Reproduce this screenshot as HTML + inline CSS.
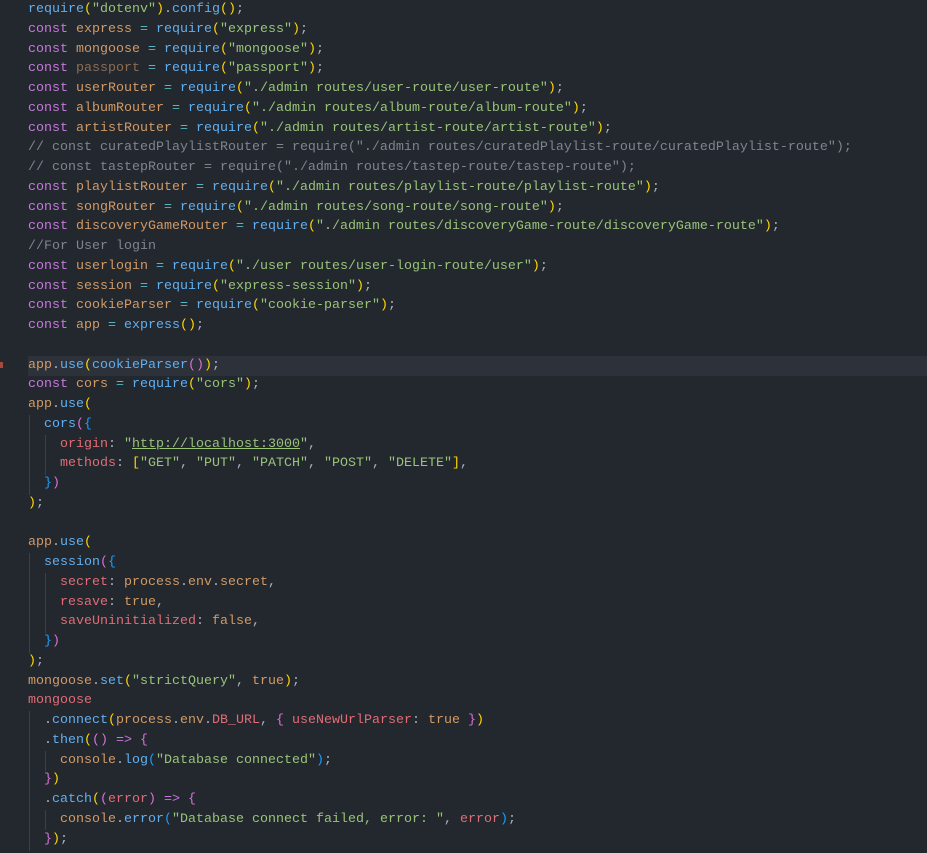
<!DOCTYPE html>
<html><head><meta charset="utf-8"><style>
html,body{margin:0;padding:0;background:#23272e;width:927px;height:853px;overflow:hidden}
pre{margin:0;position:absolute;left:28px;top:0;font-family:"Liberation Mono",monospace;font-size:13.33px;line-height:19.75px;color:#abb2bf;white-space:pre}
.k{color:#c678dd}.v{color:#d19a66}.u{color:#8c6d53}.f{color:#61afef}.s{color:#98c379}.c{color:#7f848e}.o{color:#56b6c2}.p{color:#e06c75}
.y{color:#ffd700}.m{color:#da70d6}.b{color:#179fff}
.hl{position:absolute;left:28px;right:0;top:356px;height:20px;background:#2c313a}
.g{position:absolute;width:1px;background:#3b4048}
.dot{position:absolute;left:0;width:3px;height:6px;background:#7a4a3a}
</style></head><body>
<div class="hl"></div>
<div class="g" style="left:29px;top:415px;height:80px"></div>
<div class="g" style="left:45px;top:435px;height:40px"></div>
<div class="g" style="left:29px;top:553px;height:100px"></div>
<div class="g" style="left:45px;top:573px;height:60px"></div>
<div class="g" style="left:29px;top:711px;height:140px"></div>
<div class="g" style="left:45px;top:751px;height:20px"></div>
<div class="g" style="left:45px;top:810px;height:20px"></div>
<div class="dot" style="top:362px;background:#a84a3a"></div>
<pre><span class="f">require</span><span class="y">(</span><span class="s">"dotenv"</span><span class="y">)</span>.<span class="f">config</span><span class="y">()</span>;
<span class="k">const</span> <span class="v">express</span> <span class="o">=</span> <span class="f">require</span><span class="y">(</span><span class="s">"express"</span><span class="y">)</span>;
<span class="k">const</span> <span class="v">mongoose</span> <span class="o">=</span> <span class="f">require</span><span class="y">(</span><span class="s">"mongoose"</span><span class="y">)</span>;
<span class="k">const</span> <span class="u">passport</span> <span class="o">=</span> <span class="f">require</span><span class="y">(</span><span class="s">"passport"</span><span class="y">)</span>;
<span class="k">const</span> <span class="v">userRouter</span> <span class="o">=</span> <span class="f">require</span><span class="y">(</span><span class="s">"./admin routes/user-route/user-route"</span><span class="y">)</span>;
<span class="k">const</span> <span class="v">albumRouter</span> <span class="o">=</span> <span class="f">require</span><span class="y">(</span><span class="s">"./admin routes/album-route/album-route"</span><span class="y">)</span>;
<span class="k">const</span> <span class="v">artistRouter</span> <span class="o">=</span> <span class="f">require</span><span class="y">(</span><span class="s">"./admin routes/artist-route/artist-route"</span><span class="y">)</span>;
<span class="c">// const curatedPlaylistRouter = require("./admin routes/curatedPlaylist-route/curatedPlaylist-route");</span>
<span class="c">// const tastepRouter = require("./admin routes/tastep-route/tastep-route");</span>
<span class="k">const</span> <span class="v">playlistRouter</span> <span class="o">=</span> <span class="f">require</span><span class="y">(</span><span class="s">"./admin routes/playlist-route/playlist-route"</span><span class="y">)</span>;
<span class="k">const</span> <span class="v">songRouter</span> <span class="o">=</span> <span class="f">require</span><span class="y">(</span><span class="s">"./admin routes/song-route/song-route"</span><span class="y">)</span>;
<span class="k">const</span> <span class="v">discoveryGameRouter</span> <span class="o">=</span> <span class="f">require</span><span class="y">(</span><span class="s">"./admin routes/discoveryGame-route/discoveryGame-route"</span><span class="y">)</span>;
<span class="c">//For User login</span>
<span class="k">const</span> <span class="v">userlogin</span> <span class="o">=</span> <span class="f">require</span><span class="y">(</span><span class="s">"./user routes/user-login-route/user"</span><span class="y">)</span>;
<span class="k">const</span> <span class="v">session</span> <span class="o">=</span> <span class="f">require</span><span class="y">(</span><span class="s">"express-session"</span><span class="y">)</span>;
<span class="k">const</span> <span class="v">cookieParser</span> <span class="o">=</span> <span class="f">require</span><span class="y">(</span><span class="s">"cookie-parser"</span><span class="y">)</span>;
<span class="k">const</span> <span class="v">app</span> <span class="o">=</span> <span class="f">express</span><span class="y">()</span>;

<span class="v">app</span>.<span class="f">use</span><span class="y">(</span><span class="f">cookieParser</span><span class="m">()</span><span class="y">)</span>;
<span class="k">const</span> <span class="v">cors</span> <span class="o">=</span> <span class="f">require</span><span class="y">(</span><span class="s">"cors"</span><span class="y">)</span>;
<span class="v">app</span>.<span class="f">use</span><span class="y">(</span>
  <span class="f">cors</span><span class="m">(</span><span class="b">{</span>
    <span class="p">origin</span>: <span class="s">"<u>http://localhost:3000</u>"</span>,
    <span class="p">methods</span>: <span class="y">[</span><span class="s">"GET"</span>, <span class="s">"PUT"</span>, <span class="s">"PATCH"</span>, <span class="s">"POST"</span>, <span class="s">"DELETE"</span><span class="y">]</span>,
  <span class="b">}</span><span class="m">)</span>
<span class="y">)</span>;

<span class="v">app</span>.<span class="f">use</span><span class="y">(</span>
  <span class="f">session</span><span class="m">(</span><span class="b">{</span>
    <span class="p">secret</span>: <span class="v">process</span>.<span class="v">env</span>.<span class="v">secret</span>,
    <span class="p">resave</span>: <span class="v">true</span>,
    <span class="p">saveUninitialized</span>: <span class="v">false</span>,
  <span class="b">}</span><span class="m">)</span>
<span class="y">)</span>;
<span class="v">mongoose</span>.<span class="f">set</span><span class="y">(</span><span class="s">"strictQuery"</span>, <span class="v">true</span><span class="y">)</span>;
<span class="p">mongoose</span>
  .<span class="f">connect</span><span class="y">(</span><span class="v">process</span>.<span class="v">env</span>.<span class="p">DB_URL</span>, <span class="m">{</span> <span class="p">useNewUrlParser</span>: <span class="v">true</span> <span class="m">}</span><span class="y">)</span>
  .<span class="f">then</span><span class="y">(</span><span class="m">()</span> <span class="k">=&gt;</span> <span class="m">{</span>
    <span class="v">console</span>.<span class="f">log</span><span class="b">(</span><span class="s">"Database connected"</span><span class="b">)</span>;
  <span class="m">}</span><span class="y">)</span>
  .<span class="f">catch</span><span class="y">(</span><span class="m">(</span><span class="p">error</span><span class="m">)</span> <span class="k">=&gt;</span> <span class="m">{</span>
    <span class="v">console</span>.<span class="f">error</span><span class="b">(</span><span class="s">"Database connect failed, error: "</span>, <span class="p">error</span><span class="b">)</span>;
  <span class="m">}</span><span class="y">)</span>;
</pre>
</body></html>
